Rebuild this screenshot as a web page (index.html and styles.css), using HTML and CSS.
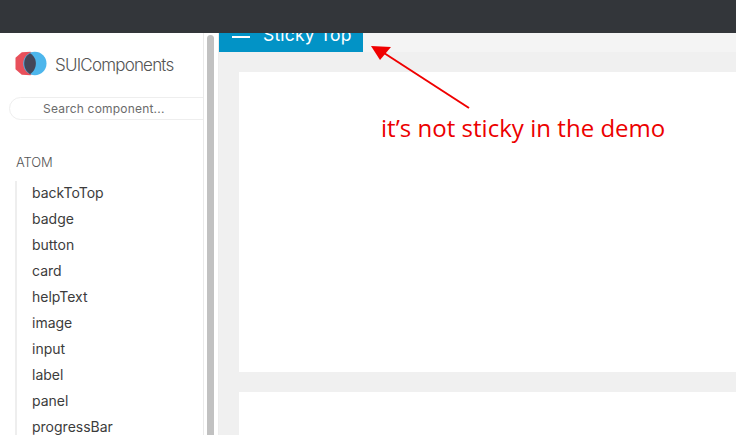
FILE: index.html
```html
<!DOCTYPE html>
<html lang="en">
<head>
<meta charset="utf-8">
<title>SUIComponents</title>
<link rel="stylesheet" href="styles.css">
</head>
<body>
<header class="topbar"></header>
<div class="app">
  <aside class="sidebar">
    <div class="brand">
      <svg class="logo" width="32" height="25" viewBox="0 0 33 25">
        <polygon points="7,1 16,0.5 23,6 23,19 16,24.5 7,24 0.5,18.5 0.5,6.5" fill="#e8505b"/>
        <circle cx="20.5" cy="12.5" r="12" fill="#4db6ec"/>
        <path d="M15.5 2 C10.5 5 9.5 9 9.5 12.5 C9.5 16 10.5 20 15.5 23.5 C20 20.5 21.5 16 21.5 12.5 C21.5 9 20 4.5 15.5 2 Z" fill="#44475a"/>
      </svg>
      <span class="brand-name">SUIComponents</span>
    </div>
    <div class="search">Search component...</div>
    <div class="group-title">ATOM</div>
    <ul class="menu">
      <li>backToTop</li>
      <li>badge</li>
      <li>button</li>
      <li>card</li>
      <li>helpText</li>
      <li>image</li>
      <li>input</li>
      <li>label</li>
      <li>panel</li>
      <li>progressBar</li>
    </ul>
  </aside>
  <div class="scrolltrack"><div class="scrollthumb"></div></div>
  <main class="main">
    <div class="sticky">
      <div class="sticky-inner"><span class="burger"></span><span class="sticky-text">Sticky Top</span></div>
    </div>
    <div class="content">
      <div class="card card-first"></div>
      <div class="card"></div>
    </div>
    <svg class="arrow" width="110" height="65" viewBox="0 0 110 65">
      <line x1="99" y1="62" x2="14" y2="7" stroke="#f00000" stroke-width="2"/>
      <polygon points="1,0 21,1 10,14" fill="#f00000"/>
    </svg>
    <div class="note">it’s not sticky in the demo</div>
  </main>
</div>
</body>
</html>
```

FILE: styles.css
```css
* { box-sizing: border-box; }
html, body { margin: 0; padding: 0; height: 100%; overflow: hidden; background: #fff; }
body { font-family: Inter, "Liberation Sans", sans-serif; }
.topbar { height: 33px; background: #33363a; }
.app { display: flex; height: 402px; }
.sidebar { width: 204px; flex: none; overflow: hidden; background: #fff; border-right: 1px solid #eaeaea; padding-top: 17px; }
.brand { display: flex; align-items: center; height: 26px; padding-left: 15px; gap: 8px; }
.brand-name { font-family: Inter, sans-serif; font-weight: 300; font-size: 17px; letter-spacing: -0.8px; color: #555; padding-top: 3px; }
.search { margin: 21px 0 0 9px; width: 205px; height: 23px; border: 1px solid #eee; border-radius: 12px 0 0 12px; padding-left: 33px; font-size: 12px; line-height: 21px; letter-spacing: 0.2px; color: #6b6b6b; }
.group-title { margin: 33px 0 0 16px; font-size: 13px; font-weight: 300; line-height: 18px; letter-spacing: -0.1px; color: #555; }
.menu { list-style: none; margin: 10px 0 0 15px; padding: 0 0 0 15px; border-left: 2px solid #eee; }
.menu li { height: 26px; font-size: 14px; line-height: 24px; color: #3c3c3c; }
.scrolltrack { width: 15px; flex: none; background: #fff; padding: 2px 4px 0 3px; border-right: 1px solid #ececec; }
.scrollthumb { height: 100%; background: #c1c1c1; border-radius: 4px 4px 0 0; }
.main { position: relative; flex: 1; min-width: 0; overflow: hidden; background: #f0f0f0; }
.sticky { height: 19px; background: #f4f4f4; }
.sticky-inner { width: 144px; height: 19px; background: #0293c6; color: #fff; display: flex; align-items: flex-end; overflow: hidden; padding-left: 13px; }
.burger { width: 18px; height: 2px; margin-bottom: 14px; background: #fff; flex: none; }
.sticky-text { margin-left: 13px; font-size: 17.5px; line-height: 24px; height: 24px; margin-bottom: 5px; flex: none; letter-spacing: 0.2px; }
.content { padding: 20px 0 0 20px; display: flex; flex-direction: column; gap: 20px; }
.card { height: 300px; background: #fff; }
.arrow { position: absolute; left: 151px; top: 13px; }
.note { position: absolute; left: 162px; top: 79px; font-family: "Open Sans", sans-serif; font-size: 24px; line-height: 32px; letter-spacing: 0.03px; color: #ec0000; white-space: nowrap; }
```
